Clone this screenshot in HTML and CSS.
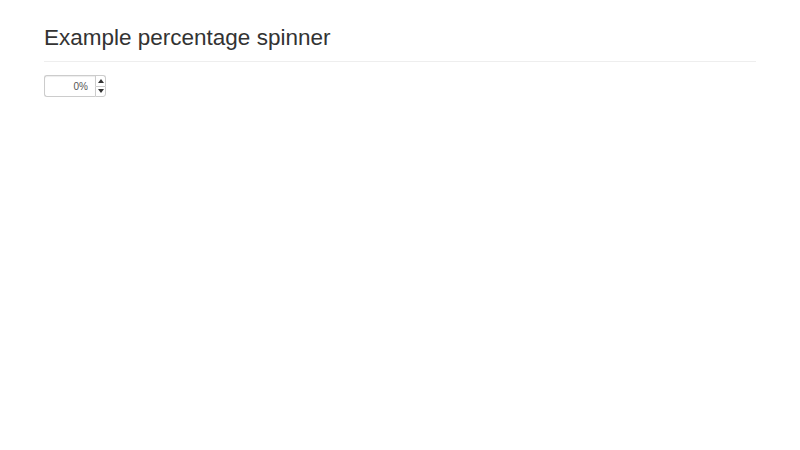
FILE: index.html
```html
<!DOCTYPE html>
<html>
<head>
<meta charset="utf-8">
<link rel="stylesheet" href="styles.css">
</head>
<body>
<div class="container">
  <div class="page-header">
    <h1>Example percentage spinner</h1>
  </div>
  <div class="spinner">
    <input class="spin-input" type="text" value="0%">
    <div class="spin-btns">
      <button class="spin-btn"><svg width="6" height="4" viewBox="0 0 6 4"><path d="M0 4L3 0L6 4Z" fill="#333"/></svg></button>
      <button class="spin-btn"><svg width="6" height="4" viewBox="0 0 6 4"><path d="M0 0L6 0L3 4Z" fill="#333"/></svg></button>
    </div>
  </div>
</div>
</body>
</html>
```
FILE: styles.css
```css
html, body { margin: 0; padding: 0; background: #fff; }
body { font-family: "Liberation Sans", Arial, sans-serif; color: #333; }
.container { padding: 0 44px; }
.page-header { border-bottom: 1px solid #eee; padding-bottom: 8px; margin-bottom: 13px; }
h1 { margin: 0; padding-top: 22px; font-size: 22.5px; font-weight: 400; line-height: 31px; color: #333; }
.spinner { display: flex; width: 62px; height: 22px; }
.spin-input { box-sizing: border-box; width: 51px; height: 22px; border: 1px solid #ccc; border-right: none; border-radius: 3px 0 0 3px; text-align: right; font-family: "Liberation Sans", Arial, sans-serif; font-size: 10px; color: #555; padding: 0 7px 0 4px; margin: 0; box-shadow: inset 0 1px 1px rgba(0,0,0,.075); outline: none; }
.spin-btns { display: flex; flex-direction: column; width: 11px; }
.spin-btn { flex: 1; margin: 0; padding: 0; border: 1px solid #ccc; background: #fff; display: flex; align-items: center; justify-content: center; }
.spin-btn:first-child { border-radius: 0 3px 0 0; border-bottom: none; }
.spin-btn:last-child { border-radius: 0 0 3px 0; }
```
